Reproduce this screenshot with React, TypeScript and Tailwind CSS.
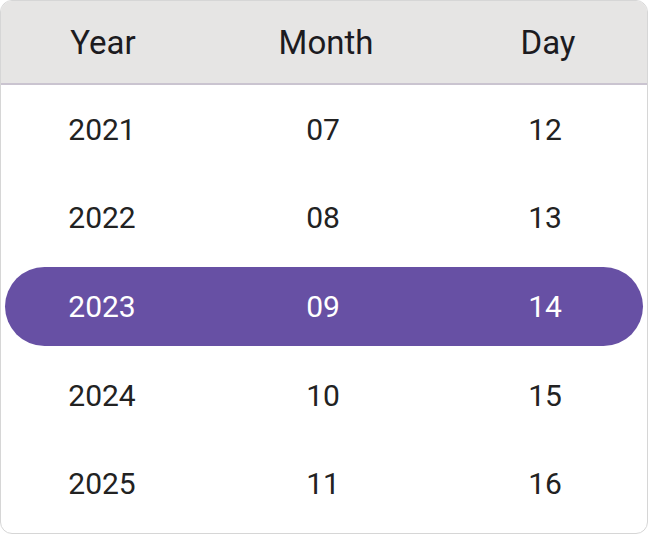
export default function App() {
  const rows = [
    ["2021", "07", "12"],
    ["2022", "08", "13"],
    ["2023", "09", "14"],
    ["2024", "10", "15"],
    ["2025", "11", "16"],
  ];
  const selected = 2;

  return (
    <div className="h-[534px] w-[648px] overflow-hidden rounded-[12px] border border-[#d6d6d6] bg-white font-['Roboto',sans-serif] text-[#1c1b1f]">
      <div className="grid h-[84px] grid-cols-[204px_242px_202px] items-center border-b-2 border-[#cac4d0] bg-[#e6e5e4] pt-[1px] text-[33px]">
        <div className="text-center">Year</div>
        <div className="text-center">Month</div>
        <div className="text-center">Day</div>
      </div>

      <div className="flex flex-col">
        {rows.map((r, i) => (
          <div key={r[0]} className="h-[88.6px] px-[4px] py-[5px]">
            <div
              className={
                i === selected
                  ? "grid h-full grid-cols-[194px_248px_196px] items-center rounded-full bg-[#6750a4] text-[30px] text-white"
                  : "grid h-full grid-cols-[194px_248px_196px] items-center text-[30px] text-[#222]"
              }
            >
              <div className="text-center">{r[0]}</div>
              <div className="text-center">{r[1]}</div>
              <div className="text-center">{r[2]}</div>
            </div>
          </div>
        ))}
      </div>
    </div>
  );
}
